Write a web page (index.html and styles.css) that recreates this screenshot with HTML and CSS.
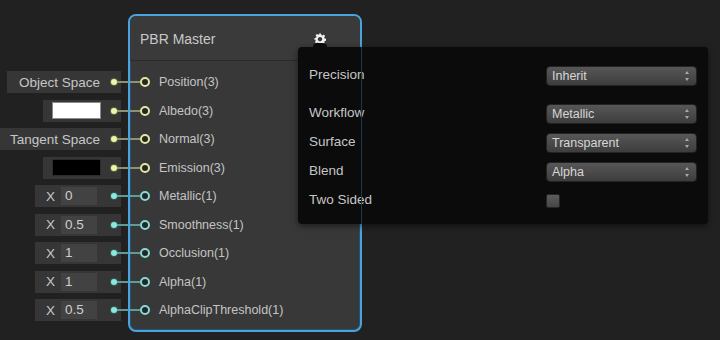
FILE: index.html
```html
<!DOCTYPE html>
<html>
<head>
<meta charset="utf-8">
<link rel="stylesheet" href="styles.css">
</head>
<body>
<div class="canvas">
  <div class="inputs">
    <div class="irow y"><div class="field f-text"><span class="ftext">Object Space</span><span class="dot"></span><span class="wire"></span></div><span class="wire out"></span></div>
    <div class="irow y"><div class="field f-swatch"><span class="swatch white"></span><span class="dot"></span><span class="wire"></span></div><span class="wire out"></span></div>
    <div class="irow y"><div class="field f-text"><span class="ftext">Tangent Space</span><span class="dot"></span><span class="wire"></span></div><span class="wire out"></span></div>
    <div class="irow y"><div class="field f-swatch"><span class="swatch black"></span><span class="dot"></span><span class="wire"></span></div><span class="wire out"></span></div>
    <div class="irow c"><div class="field f-num"><span class="xl">X</span><span class="val">0</span><span class="dot"></span><span class="wire"></span></div><span class="wire out"></span></div>
    <div class="irow c"><div class="field f-num"><span class="xl">X</span><span class="val">0.5</span><span class="dot"></span><span class="wire"></span></div><span class="wire out"></span></div>
    <div class="irow c"><div class="field f-num"><span class="xl">X</span><span class="val">1</span><span class="dot"></span><span class="wire"></span></div><span class="wire out"></span></div>
    <div class="irow c"><div class="field f-num"><span class="xl">X</span><span class="val">1</span><span class="dot"></span><span class="wire"></span></div><span class="wire out"></span></div>
    <div class="irow c"><div class="field f-num"><span class="xl">X</span><span class="val">0.5</span><span class="dot"></span><span class="wire"></span></div><span class="wire out"></span></div>
  </div>
  <div class="node">
    <div class="node-head">
      <span class="title">PBR Master</span>
      <svg class="gear" width="12" height="12" viewBox="0 0 12 12"><path fill="#f2f2f2" fill-rule="evenodd" d="M5 0.5h2l0.3 1.5 1.1 0.5 1.3-0.9 1.4 1.4-0.9 1.3 0.5 1.1 1.5 0.3v2l-1.5 0.3-0.5 1.1 0.9 1.3-1.4 1.4-1.3-0.9-1.1 0.5L7 11.5H5l-0.3-1.5-1.1-0.5-1.3 0.9-1.4-1.4 0.9-1.3-0.5-1.1L0.5 7V5l1.5-0.3 0.5-1.1-0.9-1.3 1.4-1.4 1.3 0.9 1.1-0.5zM6 4a2.2 2.2 0 1 0 0.01 0z"/></svg>
    </div>
    <div class="node-body">
      <div class="prow y"><span class="wire"></span><span class="port"></span><span class="plabel">Position(3)</span></div>
      <div class="prow y"><span class="wire"></span><span class="port"></span><span class="plabel">Albedo(3)</span></div>
      <div class="prow y"><span class="wire"></span><span class="port"></span><span class="plabel">Normal(3)</span></div>
      <div class="prow y"><span class="wire"></span><span class="port"></span><span class="plabel">Emission(3)</span></div>
      <div class="prow c"><span class="wire"></span><span class="port"></span><span class="plabel">Metallic(1)</span></div>
      <div class="prow c"><span class="wire"></span><span class="port"></span><span class="plabel">Smoothness(1)</span></div>
      <div class="prow c"><span class="wire"></span><span class="port"></span><span class="plabel">Occlusion(1)</span></div>
      <div class="prow c"><span class="wire"></span><span class="port"></span><span class="plabel">Alpha(1)</span></div>
      <div class="prow c"><span class="wire"></span><span class="port"></span><span class="plabel">AlphaClipThreshold(1)</span></div>
    </div>
  </div>
  <div class="popup">
    <span class="seam"></span>
    <div class="prop first"><span class="plbl">Precision</span><div class="dd"><span>Inherit</span><span class="arrows"></span></div></div>
    <div class="prop"><span class="plbl">Workflow</span><div class="dd"><span>Metallic</span><span class="arrows"></span></div></div>
    <div class="prop"><span class="plbl">Surface</span><div class="dd"><span>Transparent</span><span class="arrows"></span></div></div>
    <div class="prop"><span class="plbl">Blend</span><div class="dd"><span>Alpha</span><span class="arrows"></span></div></div>
    <div class="prop"><span class="plbl">Two Sided</span><div class="ctl"><span class="check"></span></div></div>
  </div>
</div>
</body>
</html>
```

FILE: styles.css
```css
* { box-sizing: border-box; }
html, body { margin: 0; padding: 0; }
body {
  background: #212121;
  font-family: "Liberation Sans", Arial, sans-serif;
  color: #c6c6c6;
  width: 720px;
  height: 340px;
  overflow: hidden;
}
.canvas {
  position: relative;
  display: flex;
  align-items: flex-start;
  padding-top: 14px;
  height: 340px;
}

/* input fields */
.inputs {
  width: 128px;
  flex-shrink: 0;
  padding-top: 54px;
  display: flex;
  flex-direction: column;
}
.irow {
  height: 28.5px;
  display: flex;
  align-items: center;
  justify-content: flex-end;
}
.field {
  height: 22px;
  display: flex;
  align-items: center;
  background: #363636;
  font-size: 13.5px;
  white-space: nowrap;
}
.f-text { padding-left: 12px; }
.f-text .dot { margin-left: 11px; }
.f-swatch { padding-left: 9px; }
.f-swatch .dot { margin-left: 10px; }
.f-num { padding-left: 11px; }
.f-num .dot { margin-left: 14px; }
.swatch {
  width: 49px;
  height: 17px;
  border: 1px solid #555;
}
.swatch.white { background: #ffffff; border-color: #8a8a8a; }
.swatch.black { background: #000000; border-color: #2c2c2c; }
.xl { width: 15px; color: #c8c8c8; }
.val {
  width: 36px;
  height: 18px;
  line-height: 18px;
  padding-left: 4px;
  background: #424242;
  color: #cfcfcf;
}
.dot {
  width: 6px;
  height: 6px;
  border-radius: 50%;
  flex-shrink: 0;
}
.wire { height: 2px; flex-shrink: 0; }
.field .wire { width: 4px; }
.wire.out { width: 7px; }
.y .dot { background: #eef3b0; box-shadow: 0 0 0 1px #5d6233; }
.c .dot { background: #8fe6df; box-shadow: 0 0 0 1px #2f5a57; }
.y .wire { background: #8d9272; }
.c .wire { background: #5f9b98; }

/* node */
.node {
  width: 234px;
  flex-shrink: 0;
  border: 2px solid #4aa3dc;
  border-radius: 8px;
  background: #383838;
  box-shadow: inset 0 0 0 1px #26506c;
  overflow: hidden;
}
.node-head {
  height: 45px;
  display: flex;
  align-items: center;
  padding-left: 10px;
  padding-top: 2px;
  border-bottom: 1px solid #2b2b2b;
  background: #3a3a3a;
}
.title { font-size: 14px; color: #c8c8c8; }
.gear { margin-left: 99px; margin-top: -1px; }
.node-body {
  padding-top: 7px;
  padding-bottom: 5px;
}
.prow {
  height: 28.5px;
  display: flex;
  align-items: center;
}
.prow .wire { width: 10px; }
.port {
  width: 10px;
  height: 10px;
  border-radius: 50%;
  border: 2px solid;
  background: #262626;
  flex-shrink: 0;
}
.y .port { border-color: #e3e99c; }
.c .port { border-color: #86d9d6; }
.plabel { margin-left: 9px; font-size: 12.5px; color: #c4c4c4; }

/* popup */
.popup {
  position: absolute;
  left: 298px;
  top: 47px;
  width: 410px;
  height: 177px;
  background: #0b0b0b;
  border-radius: 4px;
  box-shadow: 0 2px 6px rgba(0,0,0,0.5);
  padding: 19px 11px 0 11px;
  display: flex;
  flex-direction: column;
  gap: 9px;
}
.popup::before {
  content: "";
  position: absolute;
  left: 15px;
  top: -4px;
  width: 14px;
  height: 6px;
  background: #0b0b0b;
  border-radius: 4px 4px 0 0;
}
.seam {
  position: absolute;
  left: 63px;
  top: 0;
  width: 1px;
  height: 177px;
  background: #1c3a4e;
}
.prop {
  display: flex;
  align-items: center;
  justify-content: space-between;
  height: 20px;
  font-size: 13.5px;
  color: #c6c6c6;
}
.prop.first { margin-bottom: 9px; }
.plbl { margin-top: -3px; }
.dd {
  width: 151px;
  height: 20px;
  border-radius: 4px;
  background: linear-gradient(#575757, #3d3d3d);
  border: 1px solid #232323;
  display: flex;
  align-items: center;
  justify-content: space-between;
  padding: 0 6px 0 5px;
  font-size: 12.5px;
  color: #d6d6d6;
}
.arrows {
  position: relative;
  width: 5px;
  height: 10px;
}
.arrows::before, .arrows::after {
  content: "";
  position: absolute;
  left: 0;
  border-left: 2.5px solid transparent;
  border-right: 2.5px solid transparent;
}
.arrows::before { top: 0; border-bottom: 3.5px solid #a8a8a8; }
.arrows::after { bottom: 0; border-top: 3.5px solid #a8a8a8; }
.ctl { width: 151px; display: flex; align-items: center; }
.check {
  width: 14px;
  height: 14px;
  border-radius: 2px;
  background: linear-gradient(#5c5c5c, #464646);
  border: 1px solid #262626;
}
```
